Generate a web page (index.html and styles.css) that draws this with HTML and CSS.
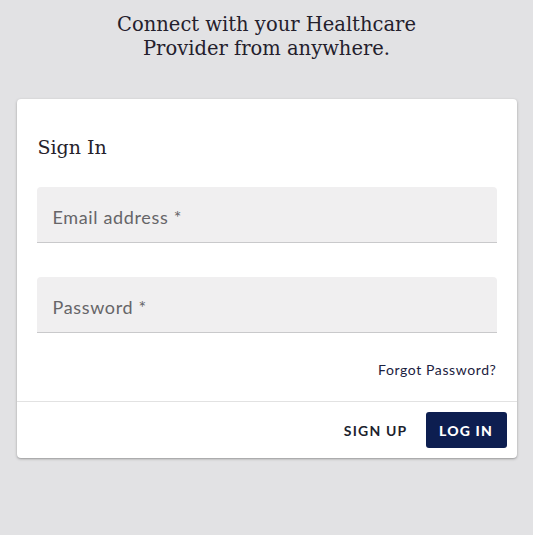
FILE: index.html
```html
<!DOCTYPE html>
<html lang="en">
<head>
<meta charset="utf-8">
<title>Sign In</title>
<link rel="stylesheet" href="styles.css">
</head>
<body>
<main class="page">
  <h1 class="tagline">Connect with your Healthcare<br>Provider from anywhere.</h1>
  <section class="card">
    <div class="card-body">
      <h2 class="card-title">Sign In</h2>
      <div class="field"><span class="field-label">Email address *</span></div>
      <div class="field field-second"><span class="field-label">Password *</span></div>
      <div class="forgot-row"><a class="forgot" href="#">Forgot Password?</a></div>
    </div>
    <div class="card-actions">
      <button class="btn btn-text" type="button">Sign up</button>
      <button class="btn btn-primary" type="button">Log in</button>
    </div>
  </section>
</main>
</body>
</html>
```

FILE: styles.css
```css
html, body {
  margin: 0;
  padding: 0;
  background: #e2e2e4;
}
body {
  font-family: Lato, "Noto Sans", "Liberation Sans", sans-serif;
  width: 533px;
  height: 535px;
  overflow: hidden;
}
.page {
  display: flex;
  flex-direction: column;
  align-items: center;
  padding-top: 13px;
}
.tagline {
  margin: 0;
  font-family: "DejaVu Serif", "Liberation Serif", serif;
  font-weight: normal;
  font-size: 19.5px;
  line-height: 24px;
  color: #24202c;
  text-align: center;
}
.card {
  margin-top: 38px;
  width: 500px;
  background: #ffffff;
  border-radius: 4px;
  box-shadow: 0 1px 3px rgba(0, 0, 0, 0.28), 0 1px 1px rgba(0, 0, 0, 0.08);
}
.card-body {
  padding: 36px 20px 0 20px;
}
.card-title {
  margin: 0 0 0 1px;
  font-family: "DejaVu Serif", "Liberation Serif", serif;
  font-weight: normal;
  font-size: 19px;
  line-height: 24px;
  color: #26222b;
}
.field {
  margin-top: 28px;
  height: 55px;
  background: #f0eff0;
  border-bottom: 1px solid #c9c9cb;
  border-radius: 4px 4px 0 0;
  padding: 0 16px;
  box-sizing: content-box;
  display: flex;
  align-items: flex-start;
}
.field-second {
  margin-top: 34px;
}
.field-label {
  padding-top: 20px;
  font-size: 18px;
  line-height: 20px;
  color: #666568;
  letter-spacing: 0.65px;
}
.forgot-row {
  display: flex;
  justify-content: flex-end;
  padding: 29px 0 23px;
}
.forgot {
  font-size: 14px;
  line-height: 16px;
  color: #1b2140;
  text-decoration: none;
  letter-spacing: 0.6px;
}
.card-actions {
  border-top: 1px solid #e2e2e2;
  display: flex;
  justify-content: flex-end;
  align-items: center;
  gap: 10px;
  padding: 10px;
}
.btn {
  font-family: Lato, "Noto Sans", "Liberation Sans", sans-serif;
  text-transform: uppercase;
  font-size: 14px;
  letter-spacing: 1.2px;
  height: 36px;
  border: none;
  border-radius: 3px;
  cursor: pointer;
}
.btn-text {
  background: transparent;
  color: #1d1f2e;
  font-weight: 700;
  padding: 0 8px;
}
.btn-primary {
  background: #0d1e50;
  color: #ffffff;
  font-weight: 900;
  width: 81px;
  padding: 0;
}
```
